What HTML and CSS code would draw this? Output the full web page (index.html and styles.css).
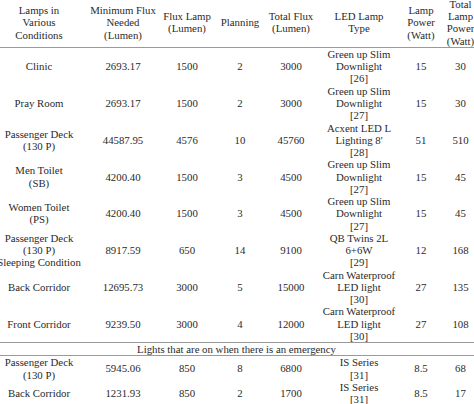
FILE: index.html
```html
<!DOCTYPE html>
<html>
<head>
<meta charset="utf-8">
<link rel="stylesheet" href="styles.css">
</head>
<body>
<table class="lamps">
  <colgroup>
    <col class="c1"><col class="c2"><col class="c3"><col class="c4"><col class="c5"><col class="c6"><col class="c7"><col class="c8">
  </colgroup>
  <thead>
    <tr class="head">
      <th>Lamps in<br>Various<br>Conditions</th>
      <th>Minimum Flux<br>Needed<br>(Lumen)</th>
      <th>Flux Lamp<br>(Lumen)</th>
      <th>Planning</th>
      <th>Total Flux<br>(Lumen)</th>
      <th>LED Lamp<br>Type</th>
      <th>Lamp<br>Power<br>(Watt)</th>
      <th>Total<br>Lamp<br>Power<br>(Watt)</th>
    </tr>
  </thead>
  <tbody>
    <tr class="row3">
      <td>Clinic</td><td>2693.17</td><td>1500</td><td>2</td><td>3000</td>
      <td>Green up Slim<br>Downlight<br>[26]</td><td>15</td><td>30</td>
    </tr>
    <tr class="row3">
      <td>Pray Room</td><td>2693.17</td><td>1500</td><td>2</td><td>3000</td>
      <td>Green up Slim<br>Downlight<br>[27]</td><td>15</td><td>30</td>
    </tr>
    <tr class="row3">
      <td>Passenger Deck<br>(130 P)</td><td>44587.95</td><td>4576</td><td>10</td><td>45760</td>
      <td>Acxent LED L<br>Lighting 8'<br>[28]</td><td>51</td><td>510</td>
    </tr>
    <tr class="row3">
      <td>Men Toilet<br>(SB)</td><td>4200.40</td><td>1500</td><td>3</td><td>4500</td>
      <td>Green up Slim<br>Downlight<br>[27]</td><td>15</td><td>45</td>
    </tr>
    <tr class="row3">
      <td>Women Toilet<br>(PS)</td><td>4200.40</td><td>1500</td><td>3</td><td>4500</td>
      <td>Green up Slim<br>Downlight<br>[27]</td><td>15</td><td>45</td>
    </tr>
    <tr class="row3">
      <td>Passenger Deck<br>(130 P)<br>Sleeping Condition</td><td>8917.59</td><td>650</td><td>14</td><td>9100</td>
      <td>QB Twins 2L<br>6+6W<br>[29]</td><td>12</td><td>168</td>
    </tr>
    <tr class="row3">
      <td>Back Corridor</td><td>12695.73</td><td>3000</td><td>5</td><td>15000</td>
      <td>Carn Waterproof<br>LED light<br>[30]</td><td>27</td><td>135</td>
    </tr>
    <tr class="row3">
      <td>Front Corridor</td><td>9239.50</td><td>3000</td><td>4</td><td>12000</td>
      <td>Carn Waterproof<br>LED light<br>[30]</td><td>27</td><td>108</td>
    </tr>
    <tr class="section">
      <td colspan="8">Lights that are on when there is an emergency</td>
    </tr>
    <tr class="row2">
      <td>Passenger Deck<br>(130 P)</td><td>5945.06</td><td>850</td><td>8</td><td>6800</td>
      <td>IS Series<br>[31]</td><td>8.5</td><td>68</td>
    </tr>
    <tr class="row2">
      <td>Back Corridor</td><td>1231.93</td><td>850</td><td>2</td><td>1700</td>
      <td>IS Series<br>[31]</td><td>8.5</td><td>17</td>
    </tr>
  </tbody>
</table>
</body>
</html>
```
FILE: styles.css
```css
html, body {
  margin: 0;
  padding: 0;
  background: #ffffff;
  overflow: hidden;
}

.lamps {
  border-collapse: collapse;
  table-layout: fixed;
  width: 489px;
  margin: -2px 0 0 -8px;
  font-family: "Liberation Serif", "Times New Roman", serif;
  font-size: 10.8px;
  line-height: 12.2px;
  color: #2a2a2a;
}

.c1 { width: 94px; }
.c2 { width: 74px; }
.c3 { width: 54px; }
.c4 { width: 52px; }
.c5 { width: 50px; }
.c6 { width: 86px; }
.c7 { width: 38px; }
.c8 { width: 41px; }

.lamps th,
.lamps td {
  padding: 0;
  text-align: center;
  vertical-align: middle;
  white-space: nowrap;
  font-weight: normal;
}

.head th {
  height: 46px;
  border-bottom: 1.5px solid #9a9a9a;
}

.row3 td {
  height: 36.8px;
}

.section td {
  height: 10.5px;
  border-top: 1.5px solid #9a9a9a;
  border-bottom: 1.5px solid #9a9a9a;
}

.row2 td {
  height: 24.4px;
}
```
